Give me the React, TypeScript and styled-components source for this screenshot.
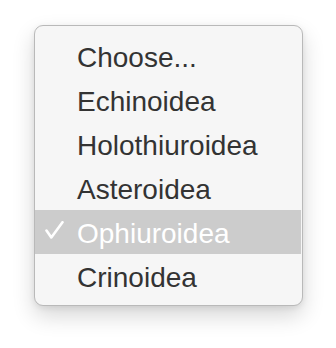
import React from "react";
import styled, { createGlobalStyle } from "styled-components";

const Global = createGlobalStyle`
  html, body { margin: 0; padding: 0; background: #ffffff; }
  body { font-family: "Liberation Sans", Arial, sans-serif; }
`;

const Page = styled.div`
  width: 336px;
  height: 348px;
  padding: 25px 0 0 34px;
  box-sizing: border-box;
`;

const Menu = styled.ul`
  list-style: none;
  margin: 0;
  width: 269px;
  box-sizing: border-box;
  padding: 8px 0 7px;
  background: #f6f6f6;
  border: 1px solid #b9b9b9;
  border-radius: 9px;
  box-shadow: 0 10px 22px rgba(0, 0, 0, 0.16), 0 2px 6px rgba(0, 0, 0, 0.08);
`;

const Item = styled.li<{ $selected?: boolean }>`
  position: relative;
  height: 44px;
  box-sizing: border-box;
  padding: 3px 0 0 42px;
  display: flex;
  align-items: center;
  font-size: 28px;
  color: ${(p) => (p.$selected ? "#ffffff" : "#333333")};
  background: ${(p) => (p.$selected ? "#cccccc" : "transparent")};
  margin-right: 1px;
`;

const Check = styled.svg`
  position: absolute;
  left: 10px;
  top: 11px;
  width: 19px;
  height: 18px;
`;

const items = ["Choose...", "Echinoidea", "Holothiuroidea", "Asteroidea", "Ophiuroidea", "Crinoidea"];

export default function App() {
  return (
    <>
      <Global />
      <Page>
        <Menu>
          {items.map((t) => (
            <Item key={t} $selected={t === "Ophiuroidea"}>
              {t === "Ophiuroidea" && (
                <Check viewBox="0 0 19 18">
                  <path
                    d="M1.5 9.5 L6.3 16.5 L17.5 1.2"
                    fill="none"
                    stroke="#ffffff"
                    strokeWidth="2.6"
                    strokeLinecap="round"
                    strokeLinejoin="round"
                  />
                </Check>
              )}
              {t}
            </Item>
          ))}
        </Menu>
      </Page>
    </>
  );
}
